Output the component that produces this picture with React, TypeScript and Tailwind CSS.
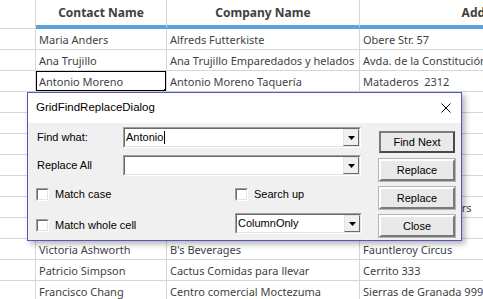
import React from "react";

const rows: [string, string, string][] = [
  ["Maria Anders", "Alfreds Futterkiste", "Obere Str. 57"],
  ["Ana Trujillo", "Ana Trujillo Emparedados y helados", "Avda. de la Constitución 2222"],
  ["Antonio Moreno", "Antonio Moreno Taquería", "Mataderos  2312"],
  ["Thomas Hardy", "Around the Horn", "120 Hanover Sq."],
  ["Christina Berglund", "Berglunds snabbköp", "Berguvsvägen  8"],
  ["Hanna Moos", "Blauer See Delikatessen", "Forsterstr. 57"],
  ["Frédérique Citeaux", "Blondesddsl père et fils", "24, place Kléber"],
  ["Martín Sommer", "Bólido Comidas preparadas", "C/ Araquil, 67"],
  ["Laurence Lebihan", "Bon app'", "12, rue des Bouchers"],
  ["Elizabeth Lincoln", "Bottom-Dollar Markets", "23 Tsawassen Blvd."],
  ["Victoria Ashworth", "B's Beverages", "Fauntleroy Circus"],
  ["Patricio Simpson", "Cactus Comidas para llevar", "Cerrito 333"],
  ["Francisco Chang", "Centro comercial Moctezuma", "Sierras de Granada 9993"],
];

const cell = "h-[21px] border-b border-r border-[#d6d6d6] px-[3px] leading-[21px] whitespace-pre overflow-hidden";

// sunken 3D frame, classic windows look
function Sunken({ className, children }: { className: string; children?: React.ReactNode }) {
  return (
    <div className={`border border-t-[#a0a0a0] border-l-[#a0a0a0] border-r-white border-b-white ${className}`}>
      <div className="w-full h-full border border-t-[#696969] border-l-[#696969] border-r-[#e3e3e3] border-b-[#e3e3e3] bg-white flex items-center">
        {children}
      </div>
    </div>
  );
}

function Combo({ className, value, caret }: { className: string; value?: string; caret?: boolean }) {
  return (
    <Sunken className={className}>
      <div className="flex-1 pl-[1px] text-[11px] text-black leading-none flex items-center">
        {value}
        {caret && <span className="inline-block w-px h-[13px] bg-black ml-px" />}
      </div>
      <div className="w-[16px] h-full border border-t-[#e3e3e3] border-l-[#e3e3e3] border-r-[#696969] border-b-[#696969] bg-[#f0f0f0] flex items-center justify-center">
        <svg width="7" height="4" viewBox="0 0 7 4">
          <path d="M0 0h7L3.5 4z" fill="#000" />
        </svg>
      </div>
    </Sunken>
  );
}

function Check({ label }: { label: string }) {
  return (
    <div className="flex items-center gap-[6px]">
      <Sunken className="w-[13px] h-[13px]" />
      <span>{label}</span>
    </div>
  );
}

function Btn({ label, primary }: { label: string; primary?: boolean }) {
  return (
    <div
      className={`w-[76px] h-[22px] flex items-center justify-center bg-[#e9e9e9] ${
        primary
          ? "border-2 border-t-[#7a7a7a] border-l-[#7a7a7a] border-r-[#4a4a4a] border-b-[#4a4a4a]"
          : "border-2 border-t-white border-l-white border-r-[#7a7a7a] border-b-[#7a7a7a] outline outline-1 outline-[#b4b4b4]"
      }`}
    >
      {label}
    </div>
  );
}

export default function App() {
  return (
    <div className="relative w-[483px] h-[299px] overflow-hidden bg-white text-[11px] text-[#3f3f3f] font-['Noto_Sans',sans-serif]">
      {/* ===== Grid ===== */}
      <div className="flex">
        <div className="w-[36px] shrink-0">
          <div className="h-[29px] border-b border-r border-[#d6d6d6]" />
          {rows.map((_, i) => (
            <div key={i} className="h-[21px] border-b border-r border-[#d6d6d6]" />
          ))}
        </div>
        {[
          { title: "Contact Name", w: "w-[131px]", col: 0 },
          { title: "Company Name", w: "w-[193px]", col: 1 },
          { title: "Address", w: "w-[252px]", col: 2 },
        ].map((c) => (
          <div key={c.col} className={`${c.w} shrink-0`}>
            <div className="h-[29px] border-r border-[#d6d6d6] border-b-4 border-b-[#5ba2d8] flex items-center justify-center font-bold text-[12px] text-[#404040] whitespace-nowrap">
              {c.title}
            </div>
            {rows.map((r, i) => (
              <div key={i} className={`${cell} relative`}>
                {r[c.col]}
                {i === 2 && c.col === 0 && (
                  <>
                    <div className="absolute -left-[1px] -top-[1px] w-[132px] h-[22px] border-2 border-black" />
                    <div className="absolute -right-[3px] -bottom-[3px] w-[5px] h-[5px] bg-black" />
                  </>
                )}
              </div>
            ))}
          </div>
        ))}
      </div>

      {/* ===== Find / Replace dialog ===== */}
      <div className="absolute left-[27px] top-[92px] w-[435px] h-[149px] border border-[#5656bf] bg-[#f0f0f0] shadow-[3px_3px_6px_rgba(0,0,0,0.3)] flex flex-col font-['Liberation_Sans',sans-serif] text-[11px] text-black">
        <div className="h-[30px] bg-white flex items-center justify-between pl-[8px] pr-[10px] text-[11.5px]">
          <span>GridFindReplaceDialog</span>
          <svg width="10" height="10" viewBox="0 0 10 10">
            <path d="M0.5 0.5l9 9M9.5 0.5l-9 9" stroke="#000" strokeWidth="1" />
          </svg>
        </div>
        <div className="flex flex-1">
          <div className="w-[351px] pl-[8px]">
            <div className="flex items-center mt-[4px] h-[21px]">
              <span className="w-[87px] pl-[1px]">Find what:</span>
              <Combo className="w-[238px] h-[21px]" value="Antonio" caret />
            </div>
            <div className="flex items-center mt-[7px] h-[21px]">
              <span className="w-[87px] pl-[1px]">Replace All</span>
              <Combo className="w-[238px] h-[21px]" />
            </div>
            <div className="flex items-center mt-[12px] h-[13px]">
              <div className="w-[199px]">
                <Check label="Match case" />
              </div>
              <Check label="Search up" />
            </div>
            <div className="flex items-center mt-[12px] h-[21px]">
              <div className="w-[199px] pt-[3px]">
                <Check label="Match whole cell" />
              </div>
              <Combo className="w-[127px] h-[21px]" value="ColumnOnly" />
            </div>
          </div>
          <div className="flex flex-col gap-[6px] pt-[8px]">
            <Btn label="Find Next" primary />
            <Btn label="Replace" />
            <Btn label="Replace" />
            <Btn label="Close" />
          </div>
        </div>
      </div>
    </div>
  );
}
